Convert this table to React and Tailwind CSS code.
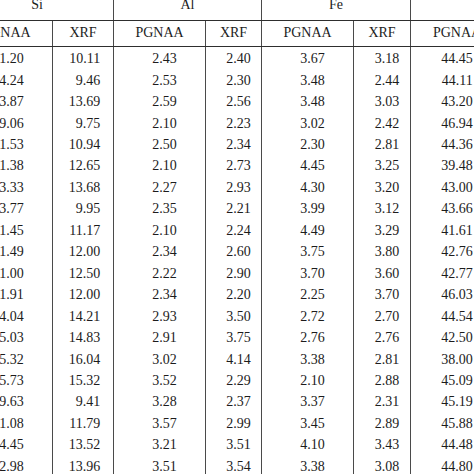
import React from "react";

const rows = [
  ["11.20", "10.11", "2.43", "2.40", "3.67", "3.18", "44.45"],
  ["14.24", "9.46", "2.53", "2.30", "3.48", "2.44", "44.11"],
  ["13.87", "13.69", "2.59", "2.56", "3.48", "3.03", "43.20"],
  ["9.06", "9.75", "2.10", "2.23", "3.02", "2.42", "46.94"],
  ["11.53", "10.94", "2.50", "2.34", "2.30", "2.81", "44.36"],
  ["11.38", "12.65", "2.10", "2.73", "4.45", "3.25", "39.48"],
  ["13.33", "13.68", "2.27", "2.93", "4.30", "3.20", "43.00"],
  ["13.77", "9.95", "2.35", "2.21", "3.99", "3.12", "43.66"],
  ["11.45", "11.17", "2.10", "2.24", "4.49", "3.29", "41.61"],
  ["11.49", "12.00", "2.34", "2.60", "3.75", "3.80", "42.76"],
  ["11.00", "12.50", "2.22", "2.90", "3.70", "3.60", "42.77"],
  ["11.91", "12.00", "2.34", "2.20", "2.25", "3.70", "46.03"],
  ["14.04", "14.21", "2.93", "3.50", "2.72", "2.70", "44.54"],
  ["15.03", "14.83", "2.91", "3.75", "2.76", "2.76", "42.50"],
  ["15.32", "16.04", "3.02", "4.14", "3.38", "2.81", "38.00"],
  ["15.73", "15.32", "3.52", "2.29", "2.10", "2.88", "45.09"],
  ["9.63", "9.41", "3.28", "2.37", "3.37", "2.31", "45.19"],
  ["11.08", "11.79", "3.57", "2.99", "3.45", "2.89", "45.88"],
  ["14.45", "13.52", "3.21", "3.51", "4.10", "3.43", "44.48"],
  ["12.98", "13.96", "3.51", "3.54", "3.38", "3.08", "44.80"],
];

const heads = ["PGNAA", "XRF", "PGNAA", "XRF", "PGNAA", "XRF", "PGNAA"];
const grid = "grid grid-cols-[92px_61px_92px_56px_92px_57px_92px]";

export default function App() {
  return (
    <div
      className="w-[474px] h-[474px] overflow-hidden bg-white text-[#1c1c1c] text-[14px] leading-none"
      style={{ fontFamily: '"Liberation Serif", "Times New Roman", serif' }}
    >
      <div className="ml-[-39px] mt-[-10px] w-[542px]">
        {/* group header */}
        <div className="grid grid-cols-[153px_148px_149px_92px] border-b border-[#2e2e2e]">
          <div className="h-[30px] flex items-center justify-center border-r border-[#4a4a4a]">Si</div>
          <div className="h-[30px] flex items-center justify-center border-r border-[#4a4a4a]">Al</div>
          <div className="h-[30px] flex items-center justify-center border-r border-[#4a4a4a]">Fe</div>
          <div className="h-[30px]"></div>
        </div>
        {/* sub header */}
        <div className={`${grid} border-b border-[#2e2e2e]`}>
          {heads.map((h, i) => (
            <div
              key={i}
              className={`h-[25px] pb-[2px] flex items-center justify-center ${i < 6 ? "border-r border-[#4a4a4a]" : ""}`}
            >
              {h}
            </div>
          ))}
        </div>
        {/* body */}
        <div className={grid}>
          {heads.map((_, c) => (
            <div
              key={c}
              className={`flex flex-col pt-[1.5px] ${c < 6 ? "border-r border-[#4a4a4a]" : ""}`}
            >
              {rows.map((r, i) => (
                <div key={i} className="h-[21.46px] flex items-center justify-center">
                  <span className={`inline-block w-[31.5px] text-right ${c === 6 ? "" : "ml-[3px]"}`}>{r[c]}</span>
                </div>
              ))}
            </div>
          ))}
        </div>
      </div>
    </div>
  );
}
